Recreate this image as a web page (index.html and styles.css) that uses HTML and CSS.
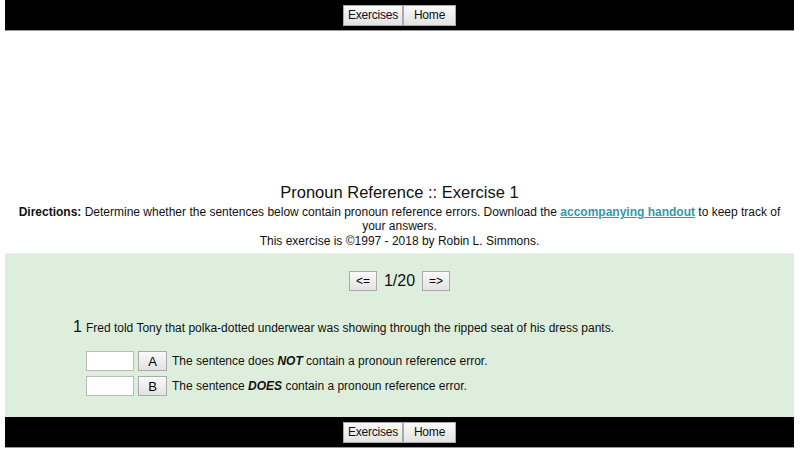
FILE: index.html
```html
<!DOCTYPE html>
<html lang="en">
<head>
    <meta charset="UTF-8">
    <title>Pronoun Reference :: Exercise 1</title>
    <link rel="stylesheet" href="styles.css">
</head>
<body>
  <div class="navbar">
    <button class="navbtn ex">Exercises</button><button class="navbtn home">Home</button>
  </div>
  <div class="spacer"></div>
  <div class="intro">
    <h1 class="title">Pronoun Reference :: Exercise 1</h1>
    <p class="directions"><b>Directions:</b> Determine whether the sentences below contain pronoun reference errors. Download the <a href="#">accompanying handout</a> to keep track of your answers.</p>
    <p class="copy">This exercise is &copy;1997 - 2018 by Robin L. Simmons.</p>
  </div>
  <div class="quiz">
    <div class="pager">
      <button class="pagebtn">&lt;=</button>
      <span class="count">1/20</span>
      <button class="pagebtn">=&gt;</button>
    </div>
    <div class="question">
      <span class="num">1</span>
      <span class="qtext">Fred told Tony that polka-dotted underwear was showing through the ripped seat of his dress pants.</span>
    </div>
    <div class="options">
      <div class="option">
        <input type="text" class="answer"><button class="letter">A</button>
        <span>The sentence does <b><i>NOT</i></b> contain a pronoun reference error.</span>
      </div>
      <div class="option">
        <input type="text" class="answer"><button class="letter">B</button>
        <span>The sentence <b><i>DOES</i></b> contain a pronoun reference error.</span>
      </div>
    </div>
  </div>
  <div class="navbar">
    <button class="navbtn ex">Exercises</button><button class="navbtn home">Home</button>
  </div>
</body>
</html>
```

FILE: styles.css
```css
* {
  margin: 0;
  padding: 0;
  box-sizing: border-box;
}
body {
  margin: 0 6px 0 5px;
  font-family: "Liberation Sans", Arial, sans-serif;
  font-size: 12px;
  color: #111;
  background: #fff;
}
.navbar {
  background: #000;
  height: 31px;
  border-bottom: 1px solid #999;
  display: flex;
  justify-content: center;
  align-items: center;
}
.navbtn {
  font-family: "Liberation Sans", Arial, sans-serif;
  font-size: 12px;
  letter-spacing: -0.2px;
  height: 21px;
  padding: 0;
  border: 1px solid #aaa;
  background: linear-gradient(#fafafa, #e2e2e2);
  color: #111;
}
.navbtn.ex {
  width: 60px;
}
.navbtn.home {
  width: 53px;
}
.spacer {
  height: 150px;
}
.intro {
  text-align: center;
  padding-bottom: 4px;
}
.title {
  font-size: 16.5px;
  font-weight: normal;
  line-height: 22px;
  margin-bottom: 2px;
}
.directions {
  line-height: 14px;
  padding: 0 10px;
}
.directions a {
  color: #3399aa;
  font-weight: bold;
}
.copy {
  line-height: 15px;
  margin-top: 1px;
}
.quiz {
  background: #deeedd;
  border-top: 1px solid #e8f2e8;
  height: 164px;
  padding-top: 17px;
}
.pager {
  display: flex;
  justify-content: center;
  align-items: center;
  gap: 7px;
}
.pagebtn {
  font-family: "Liberation Sans", Arial, sans-serif;
  font-size: 12px;
  width: 28px;
  height: 20px;
  border: 1px solid #aaa;
  background: linear-gradient(#fafafa, #e2e2e2);
}
.count {
  font-size: 16px;
}
.question {
  margin: 27px 0 0 68px;
  display: flex;
  align-items: baseline;
  gap: 4px;
}
.num {
  font-size: 16px;
}
.options {
  margin: 15px 0 0 81px;
}
.option {
  display: flex;
  align-items: center;
  margin-bottom: 5px;
}
.answer {
  width: 48px;
  height: 20px;
  border: 1px solid #bbb;
  background: #fff;
  margin-right: 4px;
}
.letter {
  font-family: "Liberation Sans", Arial, sans-serif;
  font-size: 13px;
  width: 29px;
  height: 20px;
  border: 1px solid #aaa;
  background: linear-gradient(#fafafa, #e2e2e2);
  margin-right: 5px;
}
```
